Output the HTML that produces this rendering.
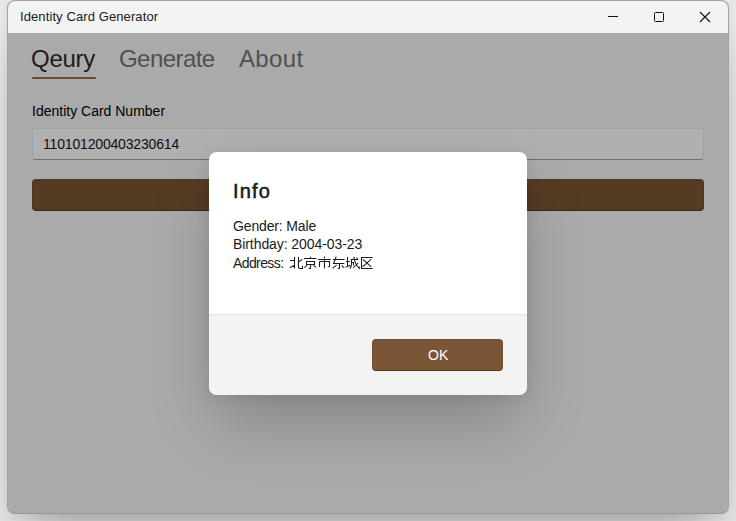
<!DOCTYPE html>
<html><head><meta charset="utf-8">
<style>
*{margin:0;padding:0;box-sizing:border-box}
html,body{width:736px;height:521px;overflow:hidden}
body{position:relative;background:#e8e8e8;font-family:"Liberation Sans",sans-serif;}
.abs{position:absolute;white-space:nowrap}
#win{position:absolute;left:7px;top:0;width:722px;height:514px;border-radius:8px;background:#aaaaaa;border:1px solid rgba(0,0,0,0.04);border-bottom-color:rgba(0,0,0,0.1);box-shadow:0 32px 48px -16px rgba(0,0,0,0.3),0 0 8px rgba(0,0,0,0.06)}
#title{position:absolute;left:8px;top:1px;width:720px;height:32px;background:#f3f3f3;border-radius:7px 7px 0 0}
#dlg{position:absolute;left:209px;top:152px;width:318px;height:243px;border-radius:8px;overflow:hidden;background:#fff;box-shadow:0 32px 64px -6px rgba(0,0,0,0.22),0 2px 14px rgba(0,0,0,0.08)}
</style></head><body>
<div id="win"></div>
<div id="title"></div>
<span class="abs" style="left:20px;top:9px;font-size:13px;color:#1a1a1a;letter-spacing:0.1px">Identity Card Generator</span>
<div class="abs" style="left:608px;top:16px;width:10px;height:1px;background:#111"></div>
<div class="abs" style="left:654px;top:12px;width:10px;height:10px;border:1px solid #111;border-radius:1.5px"></div>
<svg class="abs" style="left:699px;top:11px" width="12" height="12" viewBox="0 0 12 12"><path d="M1 1L11 11M11 1L1 11" stroke="#111" stroke-width="1.1"/></svg>

<span class="abs" style="left:31px;top:45px;font-size:24px;color:#1c1c1c;letter-spacing:-0.25px">Qeury</span>
<div class="abs" style="left:32px;top:77px;width:64px;height:2px;border-radius:1px;background:#6a4a2c"></div>
<span class="abs" style="left:119px;top:45px;font-size:24px;color:#505050;letter-spacing:-0.55px">Generate</span>
<span class="abs" style="left:239px;top:45px;font-size:24px;color:#505050;letter-spacing:0.35px">About</span>
<span class="abs" style="left:32px;top:103px;font-size:14px;color:#000">Identity Card Number</span>
<div class="abs" style="left:32px;top:128px;width:672px;height:32px;border-radius:4px;background:#b0b0b0;border:1px solid #a1a1a1;border-bottom:1px solid #707070"></div>
<span class="abs" style="left:43px;top:136px;font-size:14px;color:#0f0f0f;letter-spacing:-0.17px">110101200403230614</span>
<div class="abs" style="left:32px;top:179px;width:672px;height:32px;border-radius:4px;background:#553b24;border:1px solid rgba(0,0,0,0.04);border-bottom:1px solid rgba(0,0,0,0.32)"></div>

<div id="dlg">
  <span class="abs" style="left:24px;top:28px;font-size:20px;font-weight:400;color:#1a1a1a;-webkit-text-stroke:0.55px #1a1a1a;letter-spacing:1.2px">Info</span>
  <div class="abs" style="left:0;top:162px;width:318px;height:81px;background:#f3f3f3;border-top:1px solid #e5e5e5"></div>
  <div class="abs" style="left:163px;top:187px;width:131px;height:32px;border-radius:4px;background:#7a5536;border:1px solid rgba(0,0,0,0.04);border-bottom:1px solid rgba(0,0,0,0.32)"></div>
  <span class="abs" style="left:219px;top:195px;font-size:14px;color:#fff">OK</span>
</div>
<span class="abs" style="left:233px;top:218px;font-size:14px;color:#1a1a1a;letter-spacing:-0.15px">Gender: Male</span>
<span class="abs" style="left:233px;top:236px;font-size:14px;color:#1a1a1a;letter-spacing:-0.08px">Birthday: 2004-03-23</span>
<span class="abs" style="left:233px;top:255px;font-size:14px;color:#1a1a1a;letter-spacing:-0.6px">Address:</span>
<svg class="abs" style="left:286px;top:254px" width="90" height="18" viewBox="286 254 90 18" fill="none" stroke="#1a1a1a" stroke-width="1.05" stroke-linecap="butt">
<path d="M290 260.5H294.5M294.5 257V268.6M289.8 267.8L294.5 265.3M298.5 257V267Q298.5 268.5 300 268.5H302.5V266M298.5 261.8L302.4 259.4"/>
<path d="M310.5 256.8V258.4M304 258.5H316.5M306.5 261.5H314.5V264.5H306.5ZM310.5 264.5V268Q310.5 268.6 309.5 268.5L308.5 268.3M307.2 265.4L304.4 267.6M313.5 265.4L316 267.4"/>
<path d="M324.5 256.8V258.6M318 259.5H330.7M319.5 261.5V267M319.5 261.5H329.5V266.3Q329.5 266.8 328.7 266.8H327.8M324.5 259.5V268.6"/>
<path d="M333 259.5H344.6M336.2 256.7L333.6 263.5H344.3M339.5 263.5V268Q339.5 268.7 338.5 268.5L337.8 268.3M336.6 265.2L332.4 268.3M341.7 265.4L344.3 268"/>
<path d="M345.8 261.5H349.9M347.5 257V266.6M345.6 267.2L350.2 265.2M350.6 259.5H358.3M351.5 259.5V264Q351.5 267 349.8 268.5M351.5 262.5H353.5V265.6M354 256.8Q354.5 264 359.3 268.3V266.5M358.2 263L353.2 268M356.3 257.6L357.8 258.6"/>
<path d="M372.7 257.5H361.5V268.5H372.7M362.9 259.4L371.2 266.9M371.2 259.1L362.6 266.9"/>
</svg>
</body></html>
